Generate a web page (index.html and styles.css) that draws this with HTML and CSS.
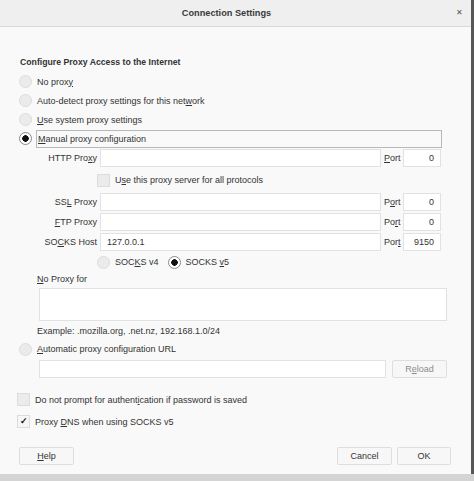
FILE: index.html
```html
<!DOCTYPE html>
<html lang="en">
<head>
    <meta charset="UTF-8">
    <title>Connection Settings</title>
    <link rel="stylesheet" href="styles.css">
</head>
<body>
    <div class="dialog">
        <div class="titlebar">
            <span class="title">Connection Settings</span>
            <span class="close">&#x2715;</span>
        </div>

        <div class="content">
            <h1 class="heading">Configure Proxy Access to the Internet</h1>

            <div class="option"><span class="radio"></span><span>No prox<u>y</u></span></div>
            <div class="option"><span class="radio"></span><span>Auto-detect proxy settings for this net<u>w</u>ork</span></div>
            <div class="option"><span class="radio"></span><span><u>U</u>se system proxy settings</span></div>
            <div class="option"><span class="radio checked"></span><span class="focus-label"><u>M</u>anual proxy configuration</span></div>

            <!-- Manual proxy fields -->
            <div class="proxy-grid">
                <span class="field-label">HTTP Pro<u>x</u>y</span>
                <span class="input"></span>
                <span class="port-label"><u>P</u>ort</span>
                <span class="input port">0</span>

                <div class="share-row">
                    <span class="check"></span>
                    <span>U<u>s</u>e this proxy server for all protocols</span>
                </div>

                <span class="field-label">SS<u>L</u> Proxy</span>
                <span class="input"></span>
                <span class="port-label">P<u>o</u>rt</span>
                <span class="input port">0</span>

                <span class="field-label"><u>F</u>TP Proxy</span>
                <span class="input"></span>
                <span class="port-label">Po<u>r</u>t</span>
                <span class="input port">0</span>

                <span class="field-label">SO<u>C</u>KS Host</span>
                <span class="input">127.0.0.1</span>
                <span class="port-label">Por<u>t</u></span>
                <span class="input port">9150</span>

                <div class="socks-row">
                    <span class="radio"></span><span>SOC<u>K</u>S v4</span>
                    <span class="radio checked v5"></span><span>SOCKS <u>v</u>5</span>
                </div>
            </div>

            <div class="small-label"><u>N</u>o Proxy for</div>
            <div class="textarea"></div>
            <div class="hint">Example: .mozilla.org, .net.nz, 192.168.1.0/24</div>

            <div class="option auto"><span class="radio"></span><span><u>A</u>utomatic proxy configuration URL</span></div>
            <div class="url-row">
                <span class="input url"></span>
                <span class="button disabled">R<u>e</u>load</span>
            </div>

            <div class="check-row first"><span class="check"></span><span>Do not prompt for authent<u>i</u>cation if password is saved</span></div>
            <div class="check-row"><span class="check checked">&#x2713;</span><span>Proxy <u>D</u>NS when using SOCKS v5</span></div>

            <div class="footer">
                <span class="button"><u>H</u>elp</span>
                <span class="spacer"></span>
                <span class="button">Cancel</span>
                <span class="button ok">OK</span>
            </div>
        </div>
    </div>
</body>
</html>
```

FILE: styles.css
```css
/* Window behind the dialog */
body {
    margin: 0;
    height: 481px;
    background-color: #d4d4d4;
    font-family: "Liberation Sans", Arial, sans-serif;
    font-size: 9px;
    color: #333;
    overflow: hidden;
}

.dialog {
    width: 471px;
    height: 474px;
    background-color: #f9f9f9;
    border-right: 3px solid #575757;
    display: flex;
    flex-direction: column;
}

u {
    text-decoration-thickness: 1px;
    text-underline-offset: 1px;
}

/* Title bar */
.titlebar {
    height: 26px;
    padding-right: 18px;
    background-color: #efefef;
    border-bottom: 1px solid #d8d8d8;
    display: flex;
    align-items: center;
    justify-content: center;
    position: relative;
}

.title {
    font-weight: bold;
    font-size: 9.2px;
    color: #3a3a3a;
}

.close {
    position: absolute;
    right: 8px;
    top: 8px;
    font-size: 8px;
    color: #555;
}

.content {
    padding: 28px 0 0 19px;
    display: flex;
    flex-direction: column;
}

.heading {
    margin: 0 0 3px 1px;
    height: 14px;
    line-height: 14px;
    font-size: 8.7px;
    font-weight: bold;
    color: #333;
}

/* Radio rows */
.option {
    height: 19px;
    display: flex;
    align-items: center;
    gap: 5px;
}

.radio {
    width: 11px;
    height: 11px;
    border: 1px solid #dcdcdc;
    border-radius: 50%;
    background-color: #ebebeb;
    flex-shrink: 0;
}

.radio.checked {
    border-color: #8a8a8a;
    background: radial-gradient(circle, #111 0 3px, #fff 3.5px);
}

.focus-label {
    width: 403px;
    height: 16px;
    line-height: 16px;
    margin-left: -1px;
    padding-left: 1px;
    border: 1px solid #b8b8b8;
}

/* Proxy host and port grid */
.proxy-grid {
    margin: 1px 0 0 18px;
    display: grid;
    grid-template-columns: 60px 281px 16px 38px;
    grid-template-rows: 18px 22px 18px 18px 18px 18px;
    column-gap: 3px;
    row-gap: 2px;
    align-items: center;
}

.field-label {
    text-align: right;
    white-space: nowrap;
}

.port-label {
    white-space: nowrap;
}

.input {
    height: 16px;
    line-height: 16px;
    background-color: #fff;
    border: 1px solid #e2e2e2;
    padding: 0 6px;
}

.input.port {
    text-align: right;
}

.share-row,
.socks-row {
    grid-column: 1 / -1;
    display: flex;
    align-items: center;
    gap: 5px;
    padding-left: 60px;
}

.socks-row .v5 {
    margin-left: 4px;
}

.check {
    width: 11px;
    height: 11px;
    border: 1px solid #dcdcdc;
    background-color: #ebebeb;
    flex-shrink: 0;
    font-size: 9px;
    font-weight: bold;
    line-height: 11px;
    text-align: center;
    color: #111;
}

.check.checked {
    background-color: #f6f6f6;
}

/* No proxy list */
.small-label {
    margin: 1px 0 0 18px;
    height: 14px;
    line-height: 14px;
}

.textarea {
    margin: 2px 0 0 20px;
    width: 406px;
    height: 31px;
    background-color: #fff;
    border: 1px solid #e2e2e2;
}

.hint {
    margin: 2px 0 0 18px;
    height: 17px;
    line-height: 17px;
}

.option.auto {
    height: 18px;
}

.url-row {
    margin: 2px 0 0 20px;
    display: flex;
    gap: 6px;
}

.input.url {
    width: 333px;
}

/* Buttons */
.button {
    height: 16px;
    line-height: 16px;
    width: 53px;
    text-align: center;
    background-color: #f7f7f7;
    border: 1px solid #dedede;
    border-radius: 2px;
    color: #333;
}

.button.disabled {
    color: #8c8c8c;
}

/* Bottom checkboxes */
.check-row {
    margin: 3px 0 0 -2px;
    height: 19px;
    display: flex;
    align-items: center;
    gap: 5px;
}

.check-row.first {
    margin-top: 12px;
}

.footer {
    margin-top: 16px;
    width: 432px;
    display: flex;
    gap: 5px;
}

.spacer {
    flex: 1;
}

.button.ok {
    width: 52px;
}
```
